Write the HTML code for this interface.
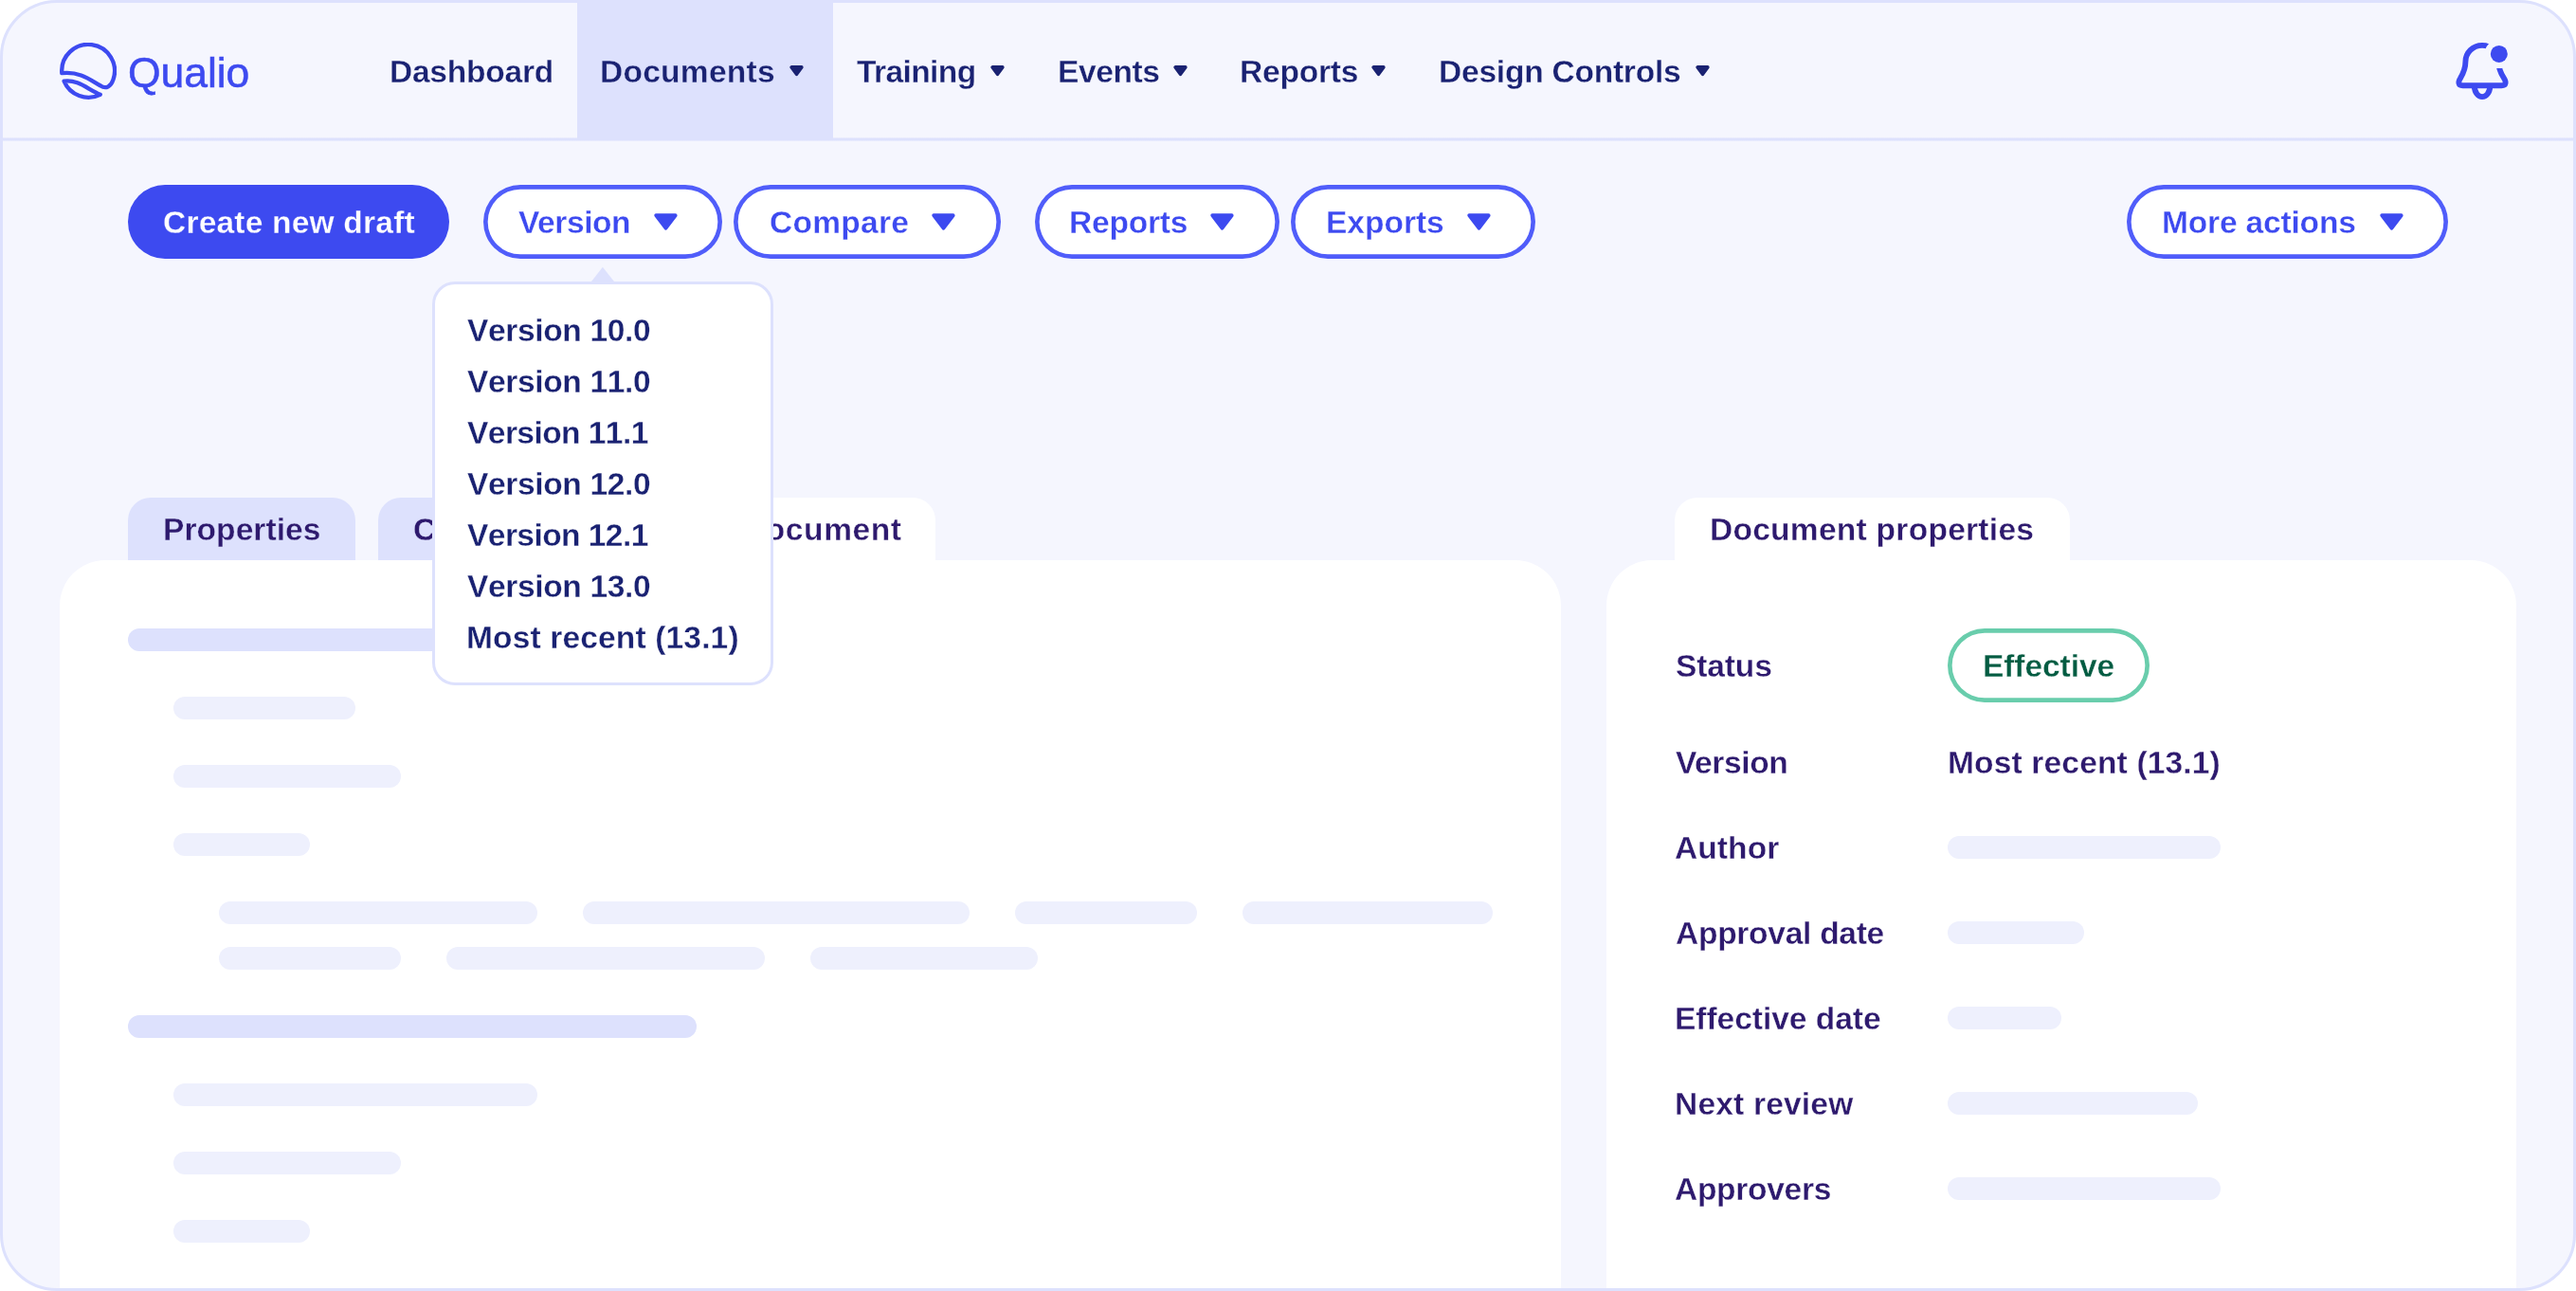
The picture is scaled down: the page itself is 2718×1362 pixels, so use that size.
<!DOCTYPE html>
<html lang="en"><head><meta charset="utf-8"><title>Qualio – Document</title>
<style>
html,body{margin:0;padding:0;background:#fff}
body{width:2718px;height:1362px;position:relative;overflow:hidden;font-family:"Liberation Sans", sans-serif}
ul,dl,dd,dt,li{margin:0;padding:0;list-style:none}
a{text-decoration:none}
.a{position:absolute;display:block}
.t{position:absolute;display:block;white-space:nowrap;font-size:33.5px;line-height:37px;font-weight:700;font-kerning:normal;will-change:transform}
.nk{font-kerning:none}
.logo{font-size:44.5px;line-height:49px;font-weight:400;color:#3d4af0;-webkit-text-stroke:.55px #3d4af0}
.navy{color:#1a2272}.purp{color:#2e1a6e}.blue{color:#3d4af0}.white{color:#fff}.green{color:#035c42}
.e-bg{-webkit-text-stroke:0.3px #f5f6fe}.e-line{-webkit-text-stroke:0.3px #dde1fd}.e-w{-webkit-text-stroke:0.3px #fff}.e-blue{-webkit-text-stroke:0.3px #3d4af0}
#app{position:absolute;left:0;top:0;width:2718px;height:1362px;border-radius:60px;overflow:hidden;background:#f5f6fe}
#frame{position:absolute;left:0;top:0;width:2718px;height:1362px;box-sizing:border-box;border:3px solid #dde1fd;border-radius:60px;pointer-events:none}
.hl{background:#dde1fd}
.rule{background:linear-gradient(to bottom,rgba(221,225,253,.55) 0 1px,#dde1fd 1px 3px,rgba(221,225,253,.55) 3px 4px)}
.primary{background:#3d4af0;border-radius:39px}
.btn{box-sizing:border-box;border-radius:39px;background:#fff;box-shadow:inset 0 0 0 4.65px #505dfa}
.tab{border-radius:24px 24px 0 0;background:#dde1fd}
.tab.on{background:#fff}
.panel{border-radius:48px 48px 0 0;background:#fff}
.bar{border-radius:12px;background:#eef0fd}
.bar.d{background:#dde1fd}
.pill{box-sizing:border-box;border-radius:39px;background:#fff;box-shadow:inset 0 0 0 4.65px #69cdac}
.menu{box-sizing:border-box;border:3px solid #dde1fd;border-radius:24px;background:#fff}
</style></head><body>
<div id="app">

<header>
<div class="a hl" style="left:609px;top:0px;width:270px;height:148px"></div>
<div class="a rule" style="left:0px;top:145px;width:2718px;height:4px"></div>
<svg class="a" style="left:63px;top:45px" width="60" height="60" viewBox="0 0 60 60" fill="none" stroke="#3d4af0" stroke-width="4.3" stroke-linejoin="round" stroke-linecap="round" aria-hidden="true">
<path d="M2.3 32.2 A27.9 27.9 0 1 1 56.3 39.4 C54.3 45.6 49 49.6 43.2 45.5 C33 40 22 30 2.3 32.2 Z"/>
<path d="M4.6 40.6 C19 38.5 30 49.5 42.8 54.8 A27.9 27.9 0 0 1 4.6 40.6 Z"/>
</svg>
<span class="t logo" style="left:135.00px;top:52px;letter-spacing:-0.057px">Qualio</span>
<nav>
<a class="t navy e-bg" style="left:410.80px;top:57px;letter-spacing:-0.227px">Dashboard</a>
<a class="t navy e-line" aria-current="page" style="left:632.90px;top:57px;letter-spacing:0.277px">Documents</a>
<svg class="a" style="left:832.6px;top:69px" width="15" height="12" viewBox="0 0 15 12" aria-hidden="true"><path d="M2.15 1.9 H12.85 L7.5 9.3 Z" fill="#1a2272" stroke="#1a2272" stroke-width="3.6" stroke-linejoin="round"/></svg>
<a class="t navy e-bg" style="left:903.70px;top:57px;letter-spacing:-0.589px">Training</a>
<svg class="a" style="left:1045.2px;top:69px" width="15" height="12" viewBox="0 0 15 12" aria-hidden="true"><path d="M2.15 1.9 H12.85 L7.5 9.3 Z" fill="#1a2272" stroke="#1a2272" stroke-width="3.6" stroke-linejoin="round"/></svg>
<a class="t navy e-bg" style="left:1115.80px;top:57px;letter-spacing:-0.405px">Events</a>
<svg class="a" style="left:1237.6px;top:69px" width="15" height="12" viewBox="0 0 15 12" aria-hidden="true"><path d="M2.15 1.9 H12.85 L7.5 9.3 Z" fill="#1a2272" stroke="#1a2272" stroke-width="3.6" stroke-linejoin="round"/></svg>
<a class="t navy e-bg" style="left:1308.00px;top:57px;letter-spacing:-0.207px">Reports</a>
<svg class="a" style="left:1447.4px;top:69px" width="15" height="12" viewBox="0 0 15 12" aria-hidden="true"><path d="M2.15 1.9 H12.85 L7.5 9.3 Z" fill="#1a2272" stroke="#1a2272" stroke-width="3.6" stroke-linejoin="round"/></svg>
<a class="t navy e-bg" style="left:1517.90px;top:57px;letter-spacing:-0.220px">Design Controls</a>
<svg class="a" style="left:1789.2px;top:69px" width="15" height="12" viewBox="0 0 15 12" aria-hidden="true"><path d="M2.15 1.9 H12.85 L7.5 9.3 Z" fill="#1a2272" stroke="#1a2272" stroke-width="3.6" stroke-linejoin="round"/></svg>
</nav>
<svg class="a" style="left:2586px;top:40px" width="70" height="70" viewBox="0 0 70 70" fill="none" stroke="#3d4af0" stroke-width="5.9" stroke-linejoin="round" role="img" aria-label="Notifications">
<mask id="bm" maskUnits="userSpaceOnUse" x="0" y="0" width="70" height="70"><rect x="0" y="0" width="70" height="70" fill="#fff" stroke="none"/><circle cx="50.8" cy="16.9" r="15.2" fill="#000" stroke="none"/></mask>
<path mask="url(#bm)" d="M33 7.85 A17.6 17.3 0 0 0 15.4 25.2 C15.4 32 13.8 36 10 42.5 C7.5 46.5 7.6 50.2 12.5 50.2 H53.5 C58.4 50.2 58.5 46.5 56 42.5 C51.9 36.2 50.1 32 50.6 25.2 A17.6 17.3 0 0 0 33 7.85 Z"/>
<path d="M24.7 50.5 C25.5 66 40.6 66 41.4 50.5"/>
<circle cx="50.8" cy="16.9" r="9" fill="#3d4af0" stroke="none"/>
</svg>
</header>
<div role="toolbar">
<div class="a primary" style="left:135px;top:195px;width:339px;height:78px"></div>
<span class="t white e-blue" style="left:171.50px;top:216px;letter-spacing:0.211px">Create new draft</span>
<div class="a btn" style="left:510px;top:195px;width:252px;height:78px"></div>
<span class="t blue e-w" style="left:546.60px;top:216px;letter-spacing:-0.411px">Version</span>
<svg class="a" style="left:689.5px;top:224.8px" width="25" height="18" viewBox="0 0 25 18" aria-hidden="true"><path d="M2.4 2.2 H22.6 L12.5 15.6 Z" fill="#3d4af0" stroke="#3d4af0" stroke-width="4" stroke-linejoin="round"/></svg>
<div class="a btn" style="left:774px;top:195px;width:282px;height:78px"></div>
<span class="t blue e-w" style="left:811.50px;top:216px;letter-spacing:0.288px">Compare</span>
<svg class="a" style="left:983.4px;top:224.8px" width="25" height="18" viewBox="0 0 25 18" aria-hidden="true"><path d="M2.4 2.2 H22.6 L12.5 15.6 Z" fill="#3d4af0" stroke="#3d4af0" stroke-width="4" stroke-linejoin="round"/></svg>
<div class="a btn" style="left:1092px;top:195px;width:258px;height:78px"></div>
<span class="t blue e-w" style="left:1127.70px;top:216px;letter-spacing:-0.207px">Reports</span>
<svg class="a" style="left:1277.4px;top:224.8px" width="25" height="18" viewBox="0 0 25 18" aria-hidden="true"><path d="M2.4 2.2 H22.6 L12.5 15.6 Z" fill="#3d4af0" stroke="#3d4af0" stroke-width="4" stroke-linejoin="round"/></svg>
<div class="a btn" style="left:1362px;top:195px;width:258px;height:78px"></div>
<span class="t blue e-w" style="left:1398.50px;top:216px;letter-spacing:0.001px">Exports</span>
<svg class="a" style="left:1547.5px;top:224.8px" width="25" height="18" viewBox="0 0 25 18" aria-hidden="true"><path d="M2.4 2.2 H22.6 L12.5 15.6 Z" fill="#3d4af0" stroke="#3d4af0" stroke-width="4" stroke-linejoin="round"/></svg>
<div class="a btn" style="left:2244px;top:195px;width:339px;height:78px"></div>
<span class="t blue e-w" style="left:2280.60px;top:216px;letter-spacing:-0.163px">More actions</span>
<svg class="a" style="left:2510.5px;top:224.8px" width="25" height="18" viewBox="0 0 25 18" aria-hidden="true"><path d="M2.4 2.2 H22.6 L12.5 15.6 Z" fill="#3d4af0" stroke="#3d4af0" stroke-width="4" stroke-linejoin="round"/></svg>
</div>
<main>
<div class="a tab" style="left:135px;top:525px;width:240px;height:90px"></div>
<span class="t purp e-line" style="left:171.60px;top:540px;letter-spacing:0.081px">Properties</span>
<div class="a tab" style="left:399px;top:525px;width:325px;height:90px"></div>
<span class="t purp e-line" style="left:436.20px;top:540px;letter-spacing:0.649px">Change control</span>
<div class="a tab on" style="left:748px;top:525px;width:239px;height:90px"></div>
<span class="t purp e-w" style="left:783.00px;top:540px;letter-spacing:0.596px">Document</span>
<div class="a panel" style="left:63px;top:590.6px;width:1584px;height:800px"></div>
<div class="a bar d" style="left:135px;top:663px;width:504px;height:24px"></div>
<div class="a bar" style="left:183px;top:735px;width:192px;height:24px"></div>
<div class="a bar" style="left:183px;top:807px;width:240px;height:24px"></div>
<div class="a bar" style="left:183px;top:879px;width:144px;height:24px"></div>
<div class="a bar" style="left:231px;top:951px;width:336px;height:24px"></div>
<div class="a bar" style="left:615px;top:951px;width:408px;height:24px"></div>
<div class="a bar" style="left:1071px;top:951px;width:192px;height:24px"></div>
<div class="a bar" style="left:1311px;top:951px;width:264px;height:24px"></div>
<div class="a bar" style="left:231px;top:999px;width:192px;height:24px"></div>
<div class="a bar" style="left:471px;top:999px;width:336px;height:24px"></div>
<div class="a bar" style="left:855px;top:999px;width:240px;height:24px"></div>
<div class="a bar d" style="left:135px;top:1071px;width:600px;height:24px"></div>
<div class="a bar" style="left:183px;top:1143px;width:384px;height:24px"></div>
<div class="a bar" style="left:183px;top:1215px;width:240px;height:24px"></div>
<div class="a bar" style="left:183px;top:1287px;width:144px;height:24px"></div>
</main>
<aside>
<div class="a tab on" style="left:1767px;top:525px;width:417px;height:90px"></div>
<span class="t purp e-w" style="left:1804.30px;top:540px;letter-spacing:0.279px">Document properties</span>
<div class="a panel" style="left:1695px;top:590.6px;width:960px;height:800px"></div>
<dl>
<dt class="t purp e-w" style="left:1768.20px;top:684px;letter-spacing:-0.110px">Status</dt>
<div class="a pill" style="left:2055px;top:663px;width:213px;height:78px"></div>
<dd class="t green e-w" style="left:2091.70px;top:684px;letter-spacing:-0.064px">Effective</dd>
<dt class="t purp e-w" style="left:1767.70px;top:786px;letter-spacing:-0.378px">Version</dt>
<dd class="t purp e-w" style="left:2054.60px;top:786px;letter-spacing:0.172px">Most recent (13.1)</dd>
<dt class="t purp e-w" style="left:1767.20px;top:876px;letter-spacing:0.092px">Author</dt>
<dd class="a bar" style="left:2055px;top:882px;width:288px;height:24px"></dd>
<dt class="t purp e-w" style="left:1767.60px;top:966px;letter-spacing:-0.262px">Approval date</dt>
<dd class="a bar" style="left:2055px;top:972px;width:144px;height:24px"></dd>
<dt class="t purp e-w" style="left:1766.50px;top:1056px;letter-spacing:-0.023px">Effective date</dt>
<dd class="a bar" style="left:2055px;top:1062px;width:120px;height:24px"></dd>
<dt class="t purp e-w" style="left:1766.50px;top:1146px;letter-spacing:0.204px">Next review</dt>
<dd class="a bar" style="left:2055px;top:1152px;width:264px;height:24px"></dd>
<dt class="t purp e-w" style="left:1767.20px;top:1236px;letter-spacing:-0.277px">Approvers</dt>
<dd class="a bar" style="left:2055px;top:1242px;width:288px;height:24px"></dd>
</dl>
</aside>
<svg class="a" style="left:621px;top:281px" width="30" height="18" viewBox="0 0 30 18" aria-hidden="true"><path d="M2.6 16.5 L14.9 0.8 L27.4 16.5 Z" fill="#dde1fd"/></svg>
<div class="a menu" style="left:456px;top:297px;width:360px;height:426px"></div>
<ul role="menu">
<li class="t navy e-w nk" role="menuitem" style="left:492.80px;top:330px;letter-spacing:-0.341px">Version 10.0</li>
<li class="t navy e-w nk" role="menuitem" style="left:492.80px;top:384px;letter-spacing:-0.341px">Version 11.0</li>
<li class="t navy e-w nk" role="menuitem" style="left:492.80px;top:438px;letter-spacing:-0.550px">Version 11.1</li>
<li class="t navy e-w nk" role="menuitem" style="left:492.80px;top:492px;letter-spacing:-0.341px">Version 12.0</li>
<li class="t navy e-w nk" role="menuitem" style="left:492.80px;top:546px;letter-spacing:-0.550px">Version 12.1</li>
<li class="t navy e-w nk" role="menuitem" style="left:492.80px;top:600px;letter-spacing:-0.341px">Version 13.0</li>
<li class="t navy e-w nk" role="menuitem" style="left:492.20px;top:654px;letter-spacing:0.160px">Most recent (13.1)</li>
</ul>
</div>
<div id="frame"></div>
</body></html>
